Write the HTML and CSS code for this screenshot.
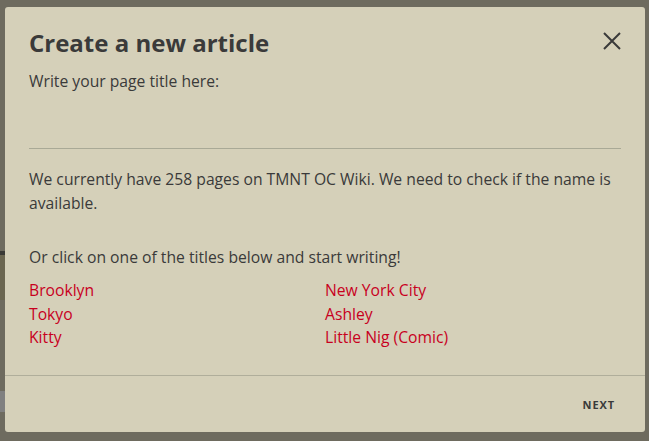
FILE: index.html
```html
<!DOCTYPE html>
<html>
<head>
<meta charset="utf-8">
<link rel="stylesheet" href="styles.css">
</head>
<body>
<div class="modal">
  <div class="modal-head">
    <h1 class="title">Create a new article</h1>
    <button class="close" aria-label="Close">
      <svg width="18" height="18" viewBox="0 0 18 18"><path d="M1 1 L17 17 M17 1 L1 17" stroke="#3a3a3a" stroke-width="2" fill="none"/></svg>
    </button>
  </div>
  <div class="modal-body">
    <label class="label">Write your page title here:</label>
    <div class="input"></div>
    <p class="info">We currently have 258 pages on TMNT OC Wiki. We need to check if the name is available.</p>
    <p class="info or">Or click on one of the titles below and start writing!</p>
    <ul class="links">
      <li><a>Brooklyn</a></li>
      <li><a>New York City</a></li>
      <li><a>Tokyo</a></li>
      <li><a>Ashley</a></li>
      <li><a>Kitty</a></li>
      <li><a>Little Nig (Comic)</a></li>
    </ul>
  </div>
  <div class="modal-foot">
    <button class="next">NEXT</button>
  </div>
</div>
</body>
</html>
```
FILE: styles.css
```css
html, body { margin: 0; padding: 0; }
body {
  width: 649px;
  height: 441px;
  overflow: hidden;
  background-color: #6e6b5f;
  background-image: linear-gradient(to bottom,
    #6e6b5f 0, #6e6b5f 251px,
    #3a3a36 251px, #3a3a36 255px,
    #6b6650 255px, #6b6650 300px,
    #6e6b5f 300px, #6e6b5f 391px,
    #808080 391px, #808080 412px,
    #6e6b5f 412px);
  background-size: 5px 100%;
  background-repeat: no-repeat;
  font-family: "Open Sans", sans-serif;
  color: #3a3a3a;
  padding: 7px 0 0 5px;
  box-sizing: border-box;
}
.modal {
  width: 640px;
  height: 425px;
  background: #d5d0b9;
  border-radius: 3px;
  display: flex;
  flex-direction: column;
  box-sizing: border-box;
}
.modal-head {
  display: flex;
  justify-content: space-between;
  align-items: flex-start;
  padding: 22px 24px 0 24px;
}
.title {
  margin: 0;
  font-size: 24px;
  line-height: 28px;
  font-weight: 700;
  color: #3a3a3a;
}
.close {
  background: none;
  border: 0;
  padding: 0;
  margin-top: 3px;
  width: 18px;
  height: 18px;
  display: flex;
}
.modal-body {
  padding: 12px 24px 0 24px;
  flex: 1;
}
.label {
  display: block;
  font-size: 15.7px;
  line-height: 24px;
}
.input {
  height: 55px;
  border-bottom: 1px solid #a9a996;
  margin-bottom: 18px;
}
.info {
  margin: 0;
  font-size: 15.7px;
  line-height: 24px;
}
.or { margin-top: 30px; }
.links {
  list-style: none;
  margin: 10px 0 0 0;
  padding: 0;
  display: grid;
  grid-template-columns: 296px 1fr;
  font-size: 15.7px;
  line-height: 23.5px;
}
.links a { color: #c8001e; }
.modal-foot {
  border-top: 1px solid #b0ae9b;
  height: 56px;
  display: flex;
  justify-content: flex-end;
  align-items: center;
  padding: 0 30px;
}
.next {
  background: none;
  border: 0;
  padding: 0;
  font-family: "Open Sans", sans-serif;
  font-weight: 700;
  font-size: 11px;
  letter-spacing: 0.9px;
  color: #3a3a3a;
}
```
